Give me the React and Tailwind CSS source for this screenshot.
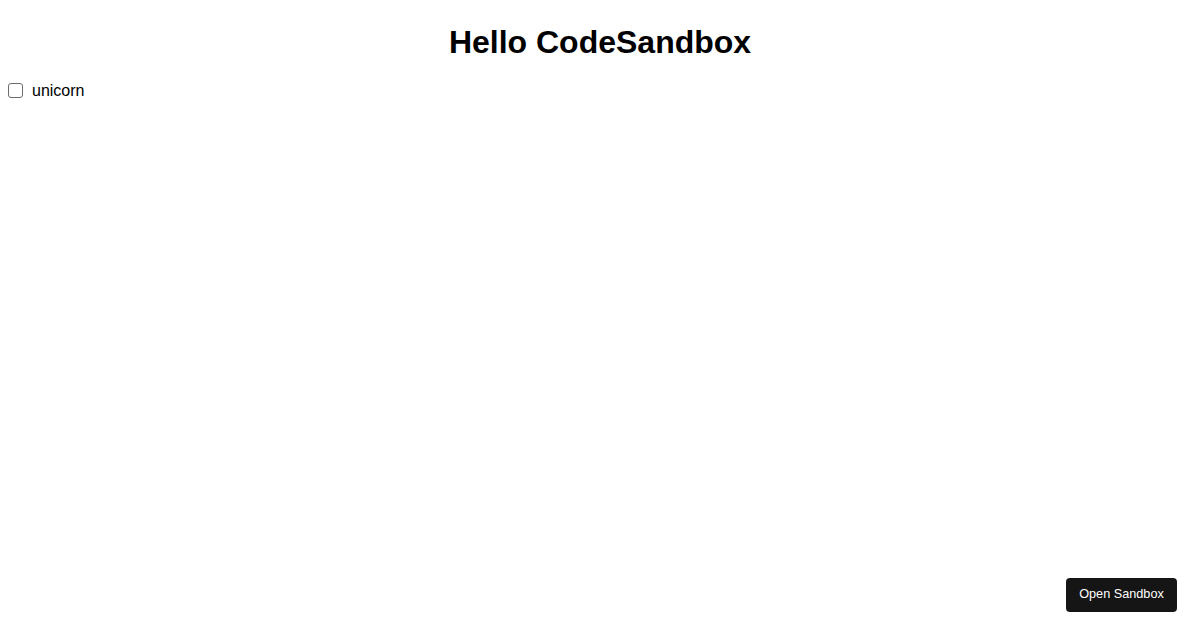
export default function App() {
  return (
    <div className="min-h-[630px] bg-white text-black" style={{ fontFamily: '"Liberation Sans", Arial, sans-serif' }}>
      <h1 className="text-center text-[32px] font-bold leading-[36.8px] pt-[23.5px] pb-[21.44px]">Hello CodeSandbox</h1>
      <label className="flex items-center pl-2 text-base leading-[18.4px]">
        <span className="box-border block w-[15px] h-[15px] rounded-[3px] border-[1.5px] border-[#6b6b6b] bg-white"></span>
        <span className="ml-[9px]">unicorn</span>
      </label>
      <button className="fixed right-[23px] bottom-[18px] h-[34px] w-[111px] rounded-[4px] bg-[#151515] text-[12.7px] text-white">
        Open Sandbox
      </button>
    </div>
  );
}
